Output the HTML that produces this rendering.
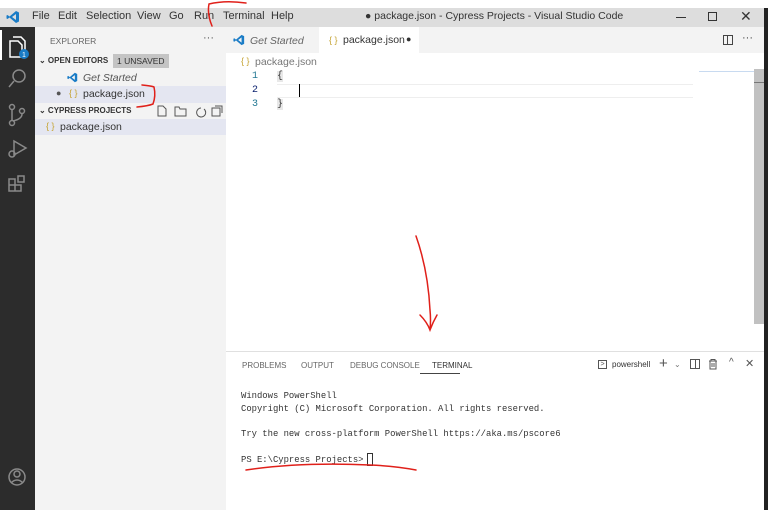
<!DOCTYPE html>
<html><head><style>
*{margin:0;padding:0;box-sizing:border-box}
body{width:768px;height:510px;overflow:hidden;background:#fff;font-family:"Liberation Sans",sans-serif;position:relative}
.a{position:absolute}
.t{font-size:11px;color:#333;white-space:nowrap}
.mono{font-family:"Liberation Mono",monospace;font-size:10px;color:#333;white-space:pre}
</style></head><body>
<div class="a" style="left:0;top:0;width:768px;height:8px;background:#fff"></div>
<div class="a" style="left:0;top:8px;width:764px;height:19px;background:#dddddd"></div>
<svg class="a" style="left:6px;top:10px" width="14" height="14" viewBox="0 0 14 14"><path d="M10 1 L13 2.5 V11.5 L10 13 L3.5 7.5 L1.5 9 L0.5 8.5 V5.5 L1.5 5 L3.5 6.5 Z M10 4 L6 7 L10 10 Z" fill="#1a7cc6" fill-rule="evenodd"/></svg>
<div class="a t" style="left:32px;top:10px">File</div>
<div class="a t" style="left:58px;top:10px">Edit</div>
<div class="a t" style="left:86px;top:10px">Selection</div>
<div class="a t" style="left:137px;top:10px">View</div>
<div class="a t" style="left:169px;top:10px">Go</div>
<div class="a t" style="left:194px;top:10px">Run</div>
<div class="a t" style="left:223px;top:10px">Terminal</div>
<div class="a t" style="left:271px;top:10px">Help</div>
<div class="a t" style="left:365px;top:10px;font-size:10.5px">● package.json - Cypress Projects - Visual Studio Code</div>
<div class="a" style="left:676px;top:17px;width:10px;height:1px;background:#333"></div>
<div class="a" style="left:708px;top:12px;width:9px;height:9px;border:1px solid #333"></div>
<div class="a t" style="left:740px;top:8px;font-size:14px">✕</div>
<div class="a" style="left:764px;top:8px;width:4px;height:502px;background:#222"></div>
<div class="a" style="left:0;top:27px;width:35px;height:483px;background:#2c2c2c"></div>
<div class="a" style="left:0;top:30px;width:2px;height:30px;background:#fff"></div>
<svg class="a" style="left:0;top:27px" width="35" height="483" fill="none" stroke="#8a8a8a" stroke-width="1.5">
<path d="M10 14 h8 l4 4 v12 h-12 z M13 10 h8 l4 4 v12" stroke="#fff"/>
<circle cx="24" cy="27" r="5" fill="#1a7cc6" stroke="none"/>
<text x="24" y="30" font-size="7" fill="#fff" stroke="none" text-anchor="middle" font-family="Liberation Sans">1</text>
<circle cx="19" cy="49" r="6"/><path d="M14 54 l-5 6"/>
<circle cx="12" cy="80" r="2.5"/><circle cx="12" cy="96" r="2.5"/><circle cx="22" cy="84" r="2.5"/><path d="M12 83 v10 M22 87 q0 5 -9 7"/>
<path d="M14 114 l12 7 l-12 7 z"/><circle cx="12" cy="127" r="3"/>
<path d="M9 152 h6 v6 h-6 z M9 158 h6 v6 h-6 z M15 158 h6 v6 h-6 z M18 149 h6 v6 h-6 z"/>
<circle cx="17" cy="450" r="8"/><circle cx="17" cy="447" r="3"/><path d="M11 456 q6 -6 12 0"/>
</svg>
<div class="a" style="left:35px;top:27px;width:191px;height:483px;background:#f3f3f3"></div>
<div class="a t" style="left:50px;top:36px;font-size:8.5px;color:#666">EXPLORER</div>
<div class="a t" style="left:203px;top:32px;color:#555">···</div>
<div class="a t" style="left:39px;top:56px;font-size:8px;font-weight:bold">⌄ OPEN EDITORS</div>
<div class="a t" style="left:113px;top:54px;font-size:8.5px;background:#c4c4c4;padding:2px 4px">1 UNSAVED</div>
<svg class="a" style="left:67px;top:72px" width="11" height="11" viewBox="0 0 14 14"><path d="M10 1 L13 2.5 V11.5 L10 13 L3.5 7.5 L1.5 9 L0.5 8.5 V5.5 L1.5 5 L3.5 6.5 Z M10 4 L6 7 L10 10 Z" fill="#1a7cc6" fill-rule="evenodd"/></svg>
<div class="a t" style="left:83px;top:72px;font-size:10.5px;font-style:italic;color:#555">Get Started</div>
<div class="a" style="left:35px;top:86px;width:191px;height:17px;background:#e4e6f1"></div>
<div class="a t" style="left:56px;top:88px;font-size:9px;color:#555">●</div>
<div class="a t" style="left:69px;top:88px;font-size:9px;color:#c5a332">{ }</div>
<div class="a t" style="left:83px;top:88px;font-size:10.5px">package.json</div>
<div class="a t" style="left:39px;top:106px;font-size:8px;font-weight:bold">⌄ CYPRESS PROJECTS</div>
<svg class="a" style="left:155px;top:104px" width="70" height="14" fill="none" stroke="#555" stroke-width="1"><path d="M3 2 h5 l3 3 v7 h-8 z"/><path d="M20 3 h4 l1 2 h6 v7 h-11 z"/><path d="M46 4 a4.5 4.5 0 1 0 3 1"/><path d="M57 4 h8 v8 h-8 z M60 2 h7 v7"/></svg>
<div class="a" style="left:35px;top:119px;width:191px;height:16px;background:#e4e6f1"></div>
<div class="a t" style="left:46px;top:121px;font-size:9px;color:#c5a332">{ }</div>
<div class="a t" style="left:60px;top:121px;font-size:10.5px">package.json</div>
<div class="a" style="left:226px;top:27px;width:538px;height:26px;background:#f3f3f3"></div>
<svg class="a" style="left:233px;top:34px" width="12" height="12" viewBox="0 0 14 14"><path d="M10 1 L13 2.5 V11.5 L10 13 L3.5 7.5 L1.5 9 L0.5 8.5 V5.5 L1.5 5 L3.5 6.5 Z M10 4 L6 7 L10 10 Z" fill="#1a7cc6" fill-rule="evenodd"/></svg>
<div class="a t" style="left:250px;top:35px;font-size:10.5px;font-style:italic;color:#666">Get Started</div>
<div class="a" style="left:319px;top:27px;width:100px;height:26px;background:#fff"></div>
<div class="a t" style="left:329px;top:35px;font-size:9px;color:#c5a332">{ }</div>
<div class="a t" style="left:343px;top:34px;font-size:10.5px">package.json</div>
<div class="a t" style="left:406px;top:34px;font-size:9px">●</div>
<div class="a" style="left:723px;top:35px;width:10px;height:10px;border:1px solid #444"></div>
<div class="a" style="left:727px;top:35px;width:1px;height:10px;background:#444"></div>
<div class="a t" style="left:742px;top:32px;color:#444">···</div>
<div class="a t" style="left:241px;top:56px;font-size:9px;color:#c5a332">{ }</div>
<div class="a t" style="left:255px;top:56px;font-size:10.5px;color:#777">package.json</div>
<div class="a" style="left:277px;top:84px;width:416px;height:14px;border-top:1px solid #eee;border-bottom:1px solid #eee"></div>
<div class="a mono" style="left:252px;top:71px;color:#237893">1</div>
<div class="a mono" style="left:252px;top:85px;color:#0b216f">2</div>
<div class="a mono" style="left:252px;top:99px;color:#237893">3</div>
<div class="a mono" style="left:277px;top:71px;background:#e8e8e8">{</div>
<div class="a mono" style="left:277px;top:99px;background:#e8e8e8">}</div>
<div class="a" style="left:299px;top:84px;width:1px;height:13px;background:#000"></div>
<div class="a" style="left:699px;top:71px;width:55px;height:1px;background:#c8daf0"></div>
<div class="a" style="left:754px;top:69px;width:10px;height:255px;background:#c1c1c1"></div>
<div class="a" style="left:754px;top:82px;width:10px;height:1px;background:#777"></div>
<div class="a" style="left:226px;top:351px;width:538px;height:1px;background:#e0e0e0"></div>
<div class="a t" style="left:242px;top:361px;font-size:8px;color:#666">PROBLEMS</div>
<div class="a t" style="left:301px;top:361px;font-size:8px;color:#666">OUTPUT</div>
<div class="a t" style="left:350px;top:361px;font-size:8px;color:#666">DEBUG CONSOLE</div>
<div class="a t" style="left:432px;top:361px;font-size:8px;color:#333">TERMINAL</div>
<div class="a" style="left:420px;top:373px;width:40px;height:1px;background:#444"></div>
<div class="a" style="left:598px;top:360px;width:9px;height:9px;border:1px solid #555;font-size:7px;line-height:7px;text-align:center;color:#555">&gt;</div>
<div class="a t" style="left:612px;top:360px;font-size:8px">powershell</div>
<div class="a t" style="left:659px;top:355px;font-size:15px;color:#555">+</div>
<div class="a t" style="left:674px;top:360px;font-size:8px;color:#777">⌄</div>
<div class="a" style="left:690px;top:359px;width:10px;height:10px;border:1px solid #555"></div>
<div class="a" style="left:695px;top:359px;width:1px;height:10px;background:#555"></div>
<svg class="a" style="left:707px;top:358px" width="12" height="12" fill="none" stroke="#555"><path d="M2 3 h8 M4 3 v-1.5 h4 v1.5 M3 3 v8 h6 v-8 M5 5 v4 M7 5 v4"/></svg>
<div class="a t" style="left:729px;top:357px;font-size:10px;color:#555">^</div>
<div class="a t" style="left:745px;top:357px;font-size:11px;color:#555">✕</div>
<div class="a mono" style="left:241px;top:390px;font-size:8.9px;line-height:12.8px">Windows PowerShell
Copyright (C) Microsoft Corporation. All rights reserved.

Try the new cross-platform PowerShell https://aka.ms/pscore6

PS E:\Cypress Projects&gt; </div>
<div class="a" style="left:367px;top:453px;width:6px;height:13px;border:1px solid #333"></div>
<svg class="a" style="left:0;top:0" width="768" height="510" fill="none" stroke="#e0201a" stroke-width="1.5" stroke-linecap="round">
<path d="M246 3 Q225 0 209 4 Q207 14 212 26"/>
<path d="M142 85 Q152 86 154 87 Q156 96 153 104 Q148 106 137 107"/>
<path d="M416 236 Q428 270 430 310 Q431 320 430 330 M420 315 Q427 322 430 330 Q433 322 437 315"/>
<path d="M246 470 Q300 462 370 465 Q395 466 416 470"/>
</svg>
</body></html>
